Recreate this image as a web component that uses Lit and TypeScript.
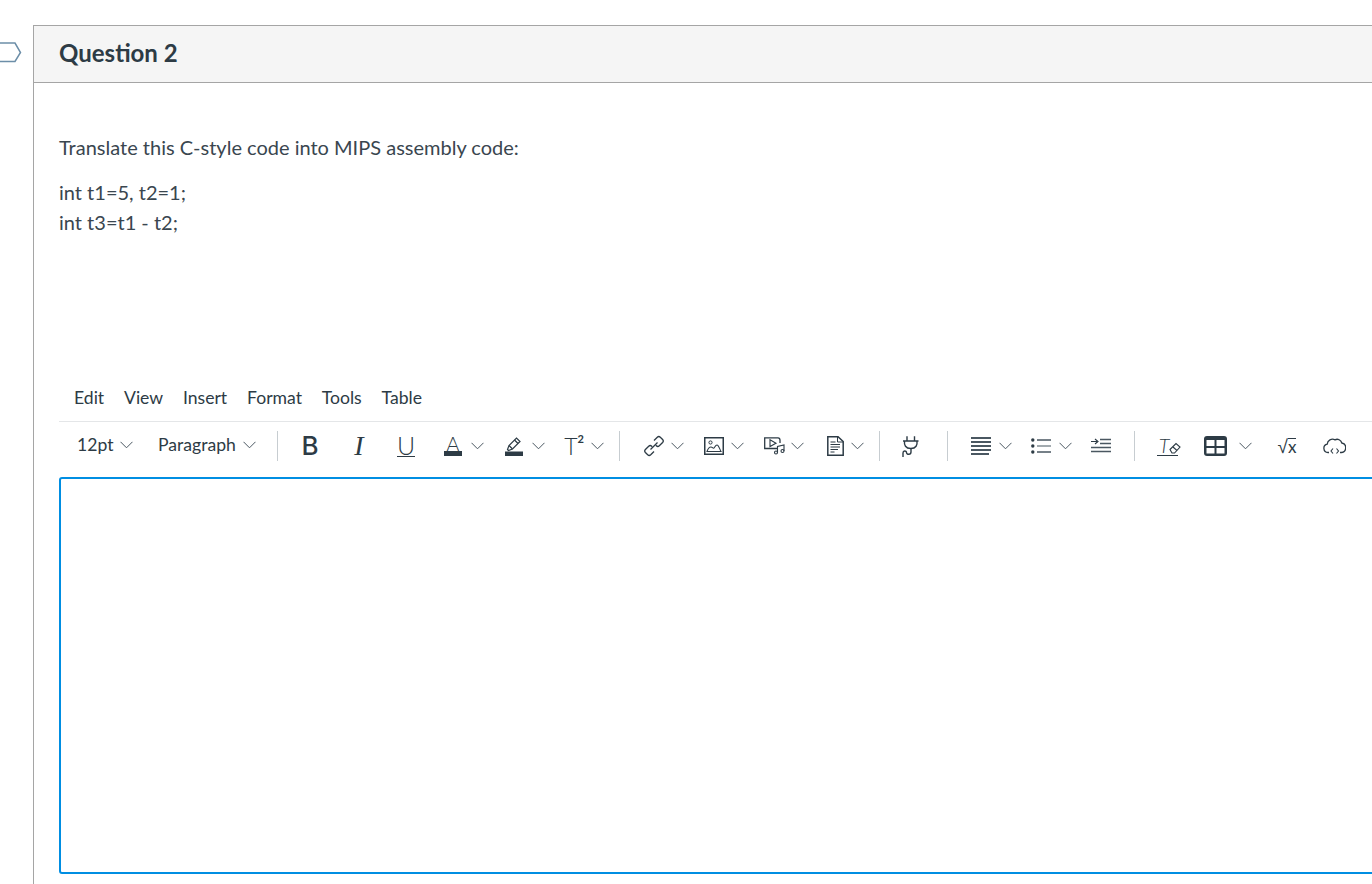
import { LitElement, html, css, svg } from "lit";
import { customElement } from "lit/decorators.js";

const S = (w: number, h: number, body: unknown) =>
  html`<svg width=${w} height=${h} viewBox="0 0 ${w} ${h}" fill="none" stroke="#2d3b45" stroke-width="1">${body}</svg>`;

const chevron = html`<svg width="13" height="8" viewBox="0 0 13 8" fill="none" stroke="#4a5761" stroke-width="1"><path d="M.5 .8 6.500 6.800 12.500 .8"/></svg>`;

const icons: Record<string, unknown> = {
  bold: html`<span class="g-b">B</span>`,
  italic: html`<span class="g-i">I</span>`,
  underline: html`<span class="g-u">U</span>`,
  color: html`<span class="g-a">A</span>`,
  highlight: S(20, 20, svg`
    <path d="M3.500 13.500 5 9.500 12.500 2 16 5.500 8.500 13 4.500 14.500Z" stroke-width="1.200"/>
    <path d="M5 9.500 8.500 13M10.500 4 14 7.500" stroke-width="1.200"/>
    <rect x="1" y="15.500" width="18" height="5" fill="#2d3b45" stroke="none"/>`),
  sup: html`<span class="g-t">T<sup>2</sup></span>`,
  link: S(22, 22, svg`
    <g stroke-width="1.300">
      <path d="M11 5.500 14.300 2.200a2.200 2.200 0 0 1 3 0l2.300 2.300a2.200 2.200 0 0 1 0 3L16.300 10.800a2.200 2.200 0 0 1-3 0L12.800 10.200"/>
      <path d="M11 16.500 7.700 19.800a2.200 2.200 0 0 1-3 0L2.400 17.500a2.200 2.200 0 0 1 0-3L5.700 11.200a2.200 2.200 0 0 1 3 0L9.200 11.800"/>
      <path d="M7.500 14.500 14.500 7.500"/>
    </g>`),
  image: S(20, 18, svg`
    <rect x=".75" y=".75" width="18.500" height="16.500" stroke-width="1.500"/>
    <circle cx="6.500" cy="5.500" r="1.600"/>
    <path d="M3 14.500c1-3 2.500-4.500 4-4.500 1.200 0 1.600 1.200 2.500 1.200 1 0 1.700-3.200 3.500-3.200 1.500 0 2.500 3.500 4 6.500Z" stroke-width="1.100"/>`),
  media: S(21, 18, svg`
    <path d="M13 11.500H.7V.8H14C15.500 .8 16 1.800 16 3.300V6" stroke-width="1.300"/>
    <path d="M6 2.800 12 6.200 6 9.600Z" stroke-width="1.100"/>
    <circle cx="12" cy="15.500" r="1.500" stroke-width="1.100"/>
    <circle cx="18.500" cy="14" r="1.500" stroke-width="1.100"/>
    <path d="M13.500 15.500V9.500L20 8V14" stroke-width="1.100"/>`),
  doc: S(17, 20, svg`
    <path d="M.8 .7H11L16.200 5.500V19.300H.8Z" stroke-width="1.500"/>
    <path d="M10.500 .7V6H16" stroke-width="1"/>
    <path d="M3.500 6H8.500M3.500 8.500H13M3.500 11H13M3.500 13.500H11M3.500 16H7.500" stroke-width="1.100"/>`),
  plug: S(20, 21, svg`
    <g stroke-width="1.400">
      <path d="M6 .3V5M13.500 .3V5"/>
      <path d="M2 5H17.500M3.500 5c-.5 4 1 7.500 6.300 7.500S16.500 9 16 5"/>
      <path d="M10 12.500V16c0 3-4.500 3-4.500 .5 0-2-3.500-2-3.500 .5V21"/>
    </g>`),
  align: S(20, 18, svg`
    <path d="M0 1H20M0 5H20M0 9H20M0 13H20M0 17H18" stroke="#4a5761" stroke-width="1.800"/>`),
  list: S(20, 16, svg`
    <circle cx="1.800" cy="2" r="1.700" fill="#2d3b45" stroke="none"/>
    <circle cx="1.800" cy="8" r="1.700" fill="#2d3b45" stroke="none"/>
    <circle cx="1.800" cy="14" r="1.700" fill="#2d3b45" stroke="none"/>
    <path d="M6 2H20M6 14H20" stroke="#4a5761" stroke-width="1.600"/>
    <path d="M6 8H20" stroke="#8b959c" stroke-width="1.600"/>`),
  indent: S(20, 16, svg`
    <path d="M0 3.500H6M4 1 7 3.500 4 6" stroke-width="1.100"/>
    <path d="M9 1.500H20M9 5.500H20M0 9.500H20M0 13.500H20" stroke="#4a5761" stroke-width="1.500"/>`),
  clear: html`<span class="g-c"><span>T</span><svg width="12" height="12" viewBox="0 0 12 12" fill="none" stroke="#2d3b45" stroke-width="1.100"><path d="M1 7.500 7 1.500 11 5 5.500 11H3Z"/><path d="M4 5 8 8.500"/></svg></span>`,
  table: html`<svg width="23" height="20" viewBox="0 0 23 20"><rect width="23" height="20" rx="3" fill="#2d3b45"/><rect x="2.500" y="4" width="8" height="6" fill="#fff"/><rect x="12.500" y="4" width="8" height="6" fill="#fff"/><rect x="2.500" y="12" width="8" height="5.500" fill="#fff"/><rect x="12.500" y="12" width="8" height="5.500" fill="#fff"/></svg>`,
  sqrt: html`<span class="g-s">√<span>x</span></span>`,
  cloud: S(23, 19, svg`
    <path d="M6 15.500H5a4.200 4.200 0 0 1-.8-8.300A5.400 5.400 0 0 1 12 2.800a4.800 4.800 0 0 1 6.800 3.200 4.800 4.800 0 0 1-.5 9.500H17" stroke-width="1.300"/>
    <path d="M10 11.500 8 14 10 16.500M13.500 11.500 15.500 14 13.500 16.500" stroke-width="1.100"/>`),
};

interface Item { icon: string; w: number; lead: number; drop?: boolean; c?: number; }
const groups: Item[][] = [
  [
    { icon: "bold", w: 48, lead: 24 }, { icon: "italic", w: 47, lead: 25 }, { icon: "underline", w: 52, lead: 25 },
    { icon: "color", w: 60, lead: 20, drop: true, c: 18 }, { icon: "highlight", w: 60, lead: 21, drop: true, c: 18 }, { icon: "sup", w: 66, lead: 20, drop: true, c: 18 },
  ],
  [
    { icon: "link", w: 60, lead: 20, drop: true, c: 17 }, { icon: "image", w: 60, lead: 20, drop: true, c: 17 },
    { icon: "media", w: 60, lead: 20, drop: true, c: 17 }, { icon: "doc", w: 65, lead: 21, drop: true, c: 16 },
  ],
  [{ icon: "plug", w: 59, lead: 23 }],
  [
    { icon: "align", w: 60, lead: 19, drop: true, c: 18 }, { icon: "list", w: 60, lead: 19, drop: true, c: 18 }, { icon: "indent", w: 52, lead: 19 },
  ],
  [
    { icon: "clear", w: 46, lead: 24 }, { icon: "table", w: 66, lead: 24, drop: true, c: 24 }, { icon: "sqrt", w: 54, lead: 30 }, { icon: "cloud", w: 46, lead: 23 },
  ],
];
const pad = [8, 14, 8, 14, 10];

@customElement("app-root")
export class AppRoot extends LitElement {
  static styles = css`
    :host { display: block; height: 884px; overflow: hidden; background: #fff; font-family: "Lato", sans-serif; color: #2d3b45; }
    .page { display: flex; height: 884px; }
    .gutter { flex: 0 0 33px; padding-top: 42px; box-sizing: border-box; overflow: hidden; }
    .gutter svg { display: block; }
    .box { flex: 1; min-width: 0; margin-top: 25px; border-left: 1px solid #a5a5a5; border-top: 1px solid #a5a5a5; overflow: hidden; }
    .head { box-sizing: content-box; height: 52px; padding: 0 0 4px 25px; background: #f5f5f5; border-bottom: 1px solid #a5a5a5; display: flex; align-items: center; font-size: 24px; font-weight: 700; color: #2d3b45; text-rendering: optimizeLegibility; font-feature-settings: "liga" 1, "dlig" 1; }
    .body { padding: 49px 0 0 25px; }
    p { margin: 0; font-size: 20px; line-height: 30px; color: #3a464f; }
    .code { margin-top: 15px; }
    .space { height: 144px; }
    .menu { display: flex; height: 32px; padding: 0 0 8px 15px; align-items: center; gap: 19.8px; font-size: 17.6px; color: #2d3b45; border-bottom: 1px solid #e4e6e8; }
    .toolbar { display: flex; height: 48px; align-items: center; padding-left: 18px; white-space: nowrap; }
    .sel { display: flex; align-items: center; gap: 7px; font-size: 17.6px; margin-bottom: 3px; }
    .sel.size { width: 81px; }
    .sel.para { width: 119px; }
    .sep { flex: none; width: 1px; height: 30px; background: #c7cdd1; }
    .group { display: flex; align-items: center; }
    .btn { display: flex; align-items: center; height: 36px; position: relative; flex: none; }
    .ic { position: absolute; top: 0; height: 36px; width: 40px; display: flex; align-items: center; justify-content: center; transform: translateX(-50%); }
    .chev { position: absolute; top: 14px; line-height: 0; }
    .g-b { font: 500 26px "Inter", sans-serif; line-height: 36px; }
    .g-i { font: italic 400 28px "Liberation Serif", serif; line-height: 36px; }
    .g-u { font: 300 25px "Lato", sans-serif; line-height: 18px; border-bottom: 1.500px solid #2d3b45; padding: 0 0 2px; width: 18px; text-align: center; }
    .g-a { font: 300 21px "Lato", sans-serif; line-height: 15px; width: 18px; text-align: center; border-bottom: 5px solid #2d3b45; display: block; }
    .g-t { font: 300 23px "Lato", sans-serif; display: flex; margin-left: 2px; }
    .g-t sup { font: 700 11px "Lato", sans-serif; line-height: 14px; vertical-align: top; }
    .g-c { display: flex; align-items: flex-end; }
    .g-c span { font: italic 300 20px "Lato", sans-serif; line-height: 19px; border-bottom: 1.500px solid #2d3b45; padding: 0 9px 0 2px; }
    .g-c svg { margin-left: -9px; margin-bottom: 2px; }
    .g-s { font: 300 19px "DejaVu Sans", sans-serif; display: flex; }
    .g-s span { font: 400 17px "Lato", sans-serif; border-top: 1px solid #2d3b45; line-height: 16px; margin-top: 3px; height: 16px; }
    .editor { box-sizing: border-box; margin: 7px -10px 0 0; height: 397px; border: 2px solid #008ee2; border-radius: 3px; background: #fff; }
  `;

  private renderItem(it: Item) {
    return html`<div class="btn" style="width:${it.w}px">
      <span class="ic" style="left:${it.lead}px">${icons[it.icon]}</span>
      ${it.drop ? html`<span class="chev" style="left:${it.lead + (it.c ?? 18)}px">${chevron}</span>` : ""}
    </div>`;
  }

  render() {
    return html`<div class="page">
      <div class="gutter">
        <svg width="22" height="21" viewBox="0 0 22 21" fill="none" stroke="#6c8ea8" stroke-width="1.500"><path d="M-2 1H15L20.500 10.500 15 19.500H-2"/></svg>
      </div>
      <div class="box">
        <div class="head">Question 2</div>
        <div class="body">
          <p>Translate this C-style code into MIPS assembly code:</p>
          <p class="code">int t1=5, t2=1;<br />int t3=t1 - t2;</p>
          <div class="space"></div>
          <div>
            <div class="menu"><span>Edit</span><span>View</span><span>Insert</span><span>Format</span><span>Tools</span><span>Table</span></div>
            <div class="toolbar">
              <div class="sel size"><span>12pt</span>${chevron}</div>
              <div class="sel para"><span>Paragraph</span>${chevron}</div>
              ${groups.map((g, i) => html`<div class="sep"></div>
                <div class="group" style="padding-left:${pad[i]}px">${g.map((it) => this.renderItem(it))}</div>`)}
            </div>
            <div class="editor"></div>
          </div>
        </div>
      </div>
    </div>`;
  }
}
